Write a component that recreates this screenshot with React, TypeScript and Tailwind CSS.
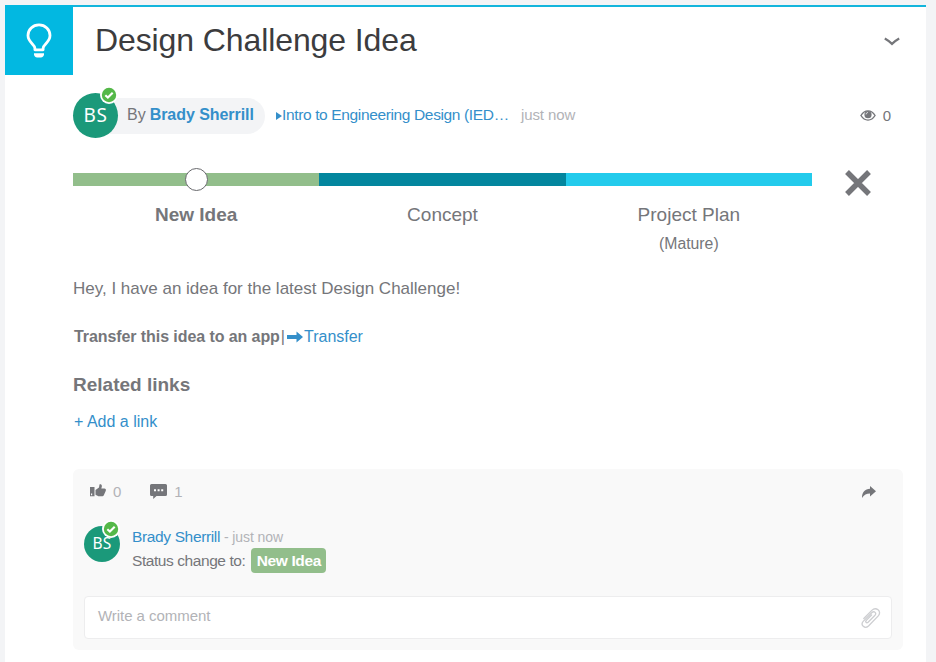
import React from 'react';

function CheckBadge({ className }: { className: string }) {
  return (
    <svg viewBox="0 0 18 18" className={className} aria-hidden="true">
      <circle cx="9" cy="9" r="9" className="fill-white" />
      <circle cx="9" cy="9" r="7.2" className="fill-[#54b848]" />
      <path d="M5.3 9.2 7.9 11.6 12.7 6.8" fill="none" stroke="#fff" strokeWidth="2.1" />
    </svg>
  );
}

function BulbIcon() {
  return (
    <svg width="26" height="35" viewBox="0 0 26 35" fill="none" aria-hidden="true">
      <path
        d="M8.9 26.8V25.2C8.9 21.2 2 19.4 2 12.6C2 6.4 6.8 1.9 13 1.9C19.2 1.9 24 6.4 24 12.6C24 19.4 17.1 21.2 17.1 25.2V26.8Z"
        stroke="#fff"
        strokeWidth="2.8"
        strokeLinejoin="round"
      />
      <path d="M8 30.2H18V31.2C18 33 16.6 34.4 14.8 34.4H11.2C9.4 34.4 8 33 8 31.2Z" fill="#fff" />
    </svg>
  );
}

function Header() {
  return (
    <header className="flex h-[70px] shrink-0">
      <div className="flex w-[68px] items-center justify-center bg-[#02b8e1]">
        <BulbIcon />
      </div>
      <div className="flex flex-1 items-center justify-between border-t-2 border-[#13b5dc] pr-[26px] pl-[22px]">
        <h1 className="pb-[2px] text-[32px] leading-[36px] tracking-[-0.1px] text-[#3c3c3e]">Design Challenge Idea</h1>
        <svg width="16" height="9" viewBox="0 0 16 9" fill="none" aria-hidden="true">
          <path d="M.8 1.4C3.5 2.8 6 5 8 6.9C10 5 12.5 2.8 15.2 1.4" stroke="#75767a" strokeWidth="2.3" />
        </svg>
      </div>
    </header>
  );
}

function AuthorRow() {
  return (
    <div className="mt-[18px] flex h-[45px] items-center text-[16px] leading-5">
      <div className="relative z-10 flex h-[45px] w-[45px] shrink-0 items-center justify-center rounded-full bg-[#1b997a] font-['Noto_Sans',sans-serif] text-[19px] tracking-[0.6px] text-white">
        <span className="pb-[2px]">BS</span>
        <CheckBadge className="absolute -top-[7px] left-[27px] h-[18px] w-[18px]" />
      </div>
      <div className="-ml-[20px] flex h-9 w-[167px] items-center gap-1 rounded-r-full bg-[#f3f4f6] pb-px pl-[29px] whitespace-nowrap text-[#75767a]">
        <span>By</span>
        <b className="tracking-[-0.05px] text-[#348fca]">Brady Sherrill</b>
      </div>
      <svg width="6" height="8" viewBox="0 0 6 8" className="ml-[11px]" aria-hidden="true">
        <path d="M0 0 6 4 0 8Z" fill="#348fca" />
      </svg>
      <span className="w-[228px] pb-px text-[15.5px] tracking-[-0.36px] whitespace-nowrap text-[#348fca]">Intro to Engineering Design (IED…</span>
      <span className="ml-[11px] pb-px text-[15px] tracking-[-0.1px] whitespace-nowrap text-[#b2b3b7]">just now</span>
      <div className="mr-[35px] ml-auto flex items-center gap-[7px] text-[15px] text-[#75767a]">
        <svg width="16" height="13" viewBox="0 0 17 13" fill="none" aria-hidden="true">
          <path d="M1 6.5C5 0 12 0 16 6.5C12 13 5 13 1 6.5Z" stroke="#75767a" strokeWidth="1.5" />
          <circle cx="8.5" cy="5.6" r="3.8" fill="#75767a" />
          <path d="M6.5 5.3C6.5 4.1 7.3 3.4 8.5 3.4" stroke="#fff" strokeWidth="0.9" />
        </svg>
        <span>0</span>
      </div>
    </div>
  );
}

function Progress() {
  return (
    <div className="mt-[28px] flex h-[93px]">
      <div className="w-[739px]">
        <div className="mt-[7px] flex h-[13px]">
          <div className="flex w-[246px] items-center justify-center bg-[#92be8b]">
            <div className="h-[23px] w-[23px] shrink-0 rounded-full border border-[#68696d] bg-white" />
          </div>
          <div className="w-[247px] bg-[#03869e]" />
          <div className="w-[246px] bg-[#23cbec]" />
        </div>
        <div className="mt-[17px] grid grid-cols-3 text-center text-[19px] leading-6 text-[#75767a]">
          <b>New Idea</b>
          <span>Concept</span>
          <div className="flex flex-col">
            <span>Project Plan</span>
            <span className="mt-[6px] text-[15.8px] leading-[22px]">(Mature)</span>
          </div>
        </div>
      </div>
      <svg width="28" height="28" viewBox="0 0 28 28" className="mt-[3px] ml-[32px]" aria-hidden="true">
        <path d="M3 3 25 25M25 3 3 25" stroke="#75767a" strokeWidth="5.4" />
      </svg>
    </div>
  );
}

function Body() {
  return (
    <div className="text-[16px] leading-5 whitespace-nowrap text-[#75767a]">
      <p className="mt-[20px] text-[17px]">Hey, I have an idea for the latest Design Challenge!</p>
      <div className="mt-[28px] flex items-center pl-px">
        <b className="tracking-[-0.08px]">Transfer this idea to an app</b>
        <span className="ml-px">|</span>
        <svg width="18" height="12" viewBox="0 0 18 12" className="ml-px shrink-0" aria-hidden="true">
          <path d="M1 4H10.5V.5L17 6 10.5 11.5V8H1Z" fill="#348fca" />
        </svg>
        <span className="text-[#348fca]">Transfer</span>
      </div>
      <h2 className="mt-[26px] text-[19px] leading-6 font-bold">Related links</h2>
      <p className="mt-[15px] pl-px text-[#348fca]">+ Add a link</p>
    </div>
  );
}

function Comments() {
  return (
    <section className="mt-[37px] h-[181px] w-[830px] rounded-[6px] bg-[#f9f9f9] px-[11px] text-[15px] leading-5 whitespace-nowrap">
      <div className="flex h-[45px] items-center pr-[16px] pl-[6px] text-[#b2b3b7]">
        <svg width="16" height="14" viewBox="0 0 16 14" fill="#75767a" aria-hidden="true" className="mb-px">
          <path fillRule="evenodd" d="M0 3H4.5V12.2H0ZM1 9.6V11.2H2.2V9.6Z" />
          <path d="M5.5 6 9 3.5 9.5.5C11 0 12.2 1 11.8 2.8L11.3 4.5H14.5C16 4.7 16.2 6 15.6 7.2L13.8 11.2C13.5 12 12.7 12.3 12 12.3H8.4L5.5 10.8Z" />
        </svg>
        <span className="ml-[7px]">0</span>
        <svg width="17" height="15" viewBox="0 0 17 15" className="ml-[29px]" aria-hidden="true">
          <path d="M1.5 0H15.5Q17 0 17 1.5V10.5Q17 12 15.5 12H6.5L3.2 15V12H1.5Q0 12 0 10.5V1.5Q0 0 1.5 0Z" fill="#75767a" />
          <path d="M4 6.2H6M7.6 6.2H9.6M11.2 6.2H13.2" stroke="#fff" strokeWidth="1.9" />
        </svg>
        <span className="ml-[7px]">1</span>
        <svg width="14" height="12" viewBox="0 0 14 12" className="ml-auto" aria-hidden="true">
          <path d="M0 12C0 6 3 3 8 2.8V0L14 5.2 8 10.4V7.5C4.5 7.5 2 8.7 0 12Z" fill="#75767a" />
        </svg>
      </div>
      <div className="flex">
        <div className="relative mt-[12px] flex h-9 w-9 shrink-0 items-center justify-center rounded-full bg-[#1b997a] font-['Noto_Sans',sans-serif] text-[15.5px] tracking-[0.3px] text-white">
          <span className="pb-[2px]">BS</span>
          <CheckBadge className="absolute -top-[6px] left-[18px] h-[18px] w-[18px]" />
        </div>
        <div className="mt-[13px] ml-[12px] text-[#75767a]">
          <div className="flex items-center">
            <span className="text-[15.5px] tracking-[-0.36px] text-[#348fca]">Brady Sherrill</span>
            <span className="ml-[4px] text-[14px] tracking-[-0.1px] text-[#b2b3b7]">- just now</span>
          </div>
          <div className="mt-px flex h-[25px] items-center">
            <span className="text-[15.5px] tracking-[-0.43px]">Status change to:</span>
            <b className="ml-[6px] flex h-[25px] w-[75px] items-center justify-center rounded-[4px] bg-[#92be8b] text-[15.5px] tracking-[-0.36px] text-white">New Idea</b>
          </div>
        </div>
      </div>
      <div className="mt-[23px] flex h-[43px] items-center justify-between rounded-[4px] border border-[#ededee] bg-white pr-[10px] pl-[13px] text-[#b2b3b7]">
        <span className="pb-[3px] tracking-[-0.05px]">Write a comment</span>
        <svg width="20" height="22" viewBox="0 0 20 22" fill="none" aria-hidden="true">
          <path
            d="M2.8 11.5 10.8 3.4C15 -.6 21 4.2 17.5 8.6L7.5 19C3.7 22.4-.9 18 2.2 14.4L10.7 5.8C13.4 3.4 16 6.2 13.8 8.5L7.1 15.3C5.4 16.5 3.9 14.7 5.3 13.4L10.6 8"
            stroke="#cdced1"
            strokeWidth="1.3"
            strokeLinecap="round"
          />
        </svg>
      </div>
    </section>
  );
}

export default function App() {
  return (
    <div className="h-[662px] w-[936px] overflow-hidden bg-[#f3f4f6] pt-[5px] pl-[5px] font-['Liberation_Sans',Arial,sans-serif]">
      <main className="flex h-[657px] w-[921px] flex-col bg-white">
        <Header />
        <div className="pl-[68px]">
          <AuthorRow />
          <Progress />
          <Body />
          <Comments />
        </div>
      </main>
    </div>
  );
}
